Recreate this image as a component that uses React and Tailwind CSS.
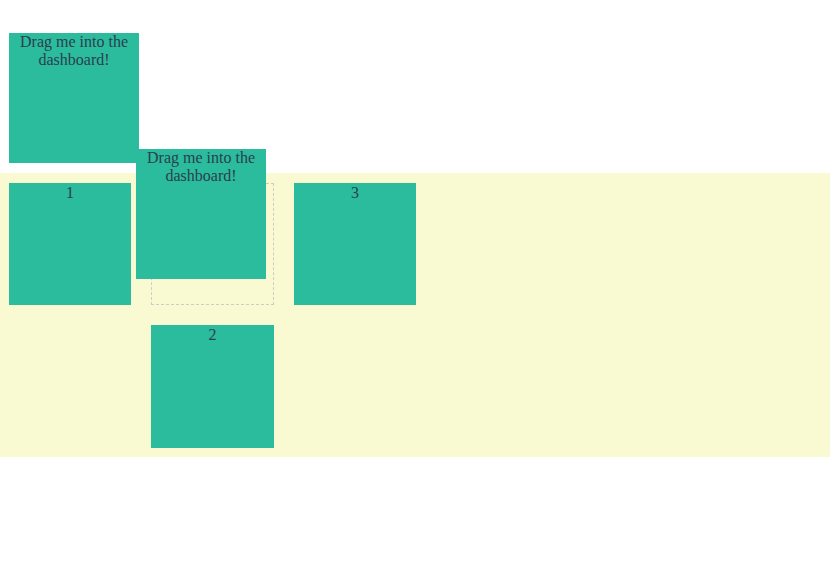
const cell = 'bg-[#2abc9c] text-center text-[#2c3e50] leading-[18px]'

function Item({ label, className = '' }) {
  return <div className={`${cell} ${className}`}>{label}</div>
}

export default function App() {
  return (
    <div className="relative h-[567px] w-[830px] bg-white text-[16px] [font-family:'Liberation_Serif',serif]">
      <div className="pl-[9px] pt-[33px] pb-[10px]">
        <Item label="Drag me into the dashboard!" className="h-[130px] w-[130px]" />
      </div>
      <div className="h-[284px] bg-[#fafad2] pl-[9px] pt-[10px]">
        <div className="grid grid-cols-[122px_123px_122px] grid-rows-[122px_123px] gap-5">
          <Item label="1" className="pt-px" />
          <div className="border border-dashed border-[#cccccc]" />
          <Item label="3" className="pt-px" />
          <div />
          <Item label="2" className="pt-px" />
        </div>
      </div>
      {/* item being dragged */}
      <Item
        label="Drag me into the dashboard!"
        className="absolute left-[136px] top-[149px] h-[130px] w-[130px]"
      />
    </div>
  )
}
